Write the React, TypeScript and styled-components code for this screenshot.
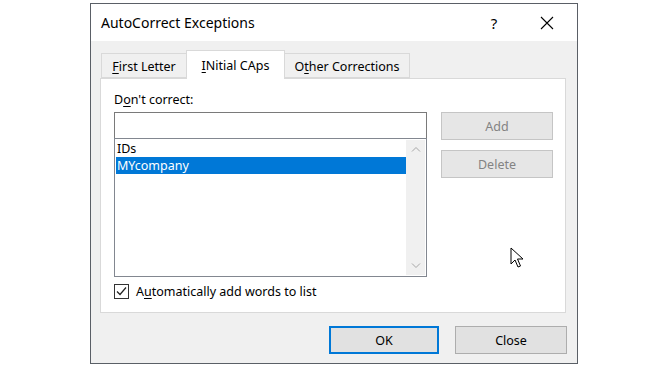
import React from 'react';
import styled, { createGlobalStyle } from 'styled-components';

const GlobalStyle = createGlobalStyle`
  html, body {
    margin: 0;
    padding: 0;
    background: #ffffff;
  }
  body {
    font-family: "Noto Sans", "Open Sans", sans-serif;
    font-size: 12.5px;
    color: #000;
  }
`;

const Page = styled.div`
  width: 669px;
  height: 369px;
  position: relative;
  overflow: hidden;
  background: #fff;
`;

const Dialog = styled.div`
  margin: 3px 0 0 90px;
  width: 486px;
  height: 359px;
  border: 1px solid #5a5f66;
  background: #f0f0f0;
  display: flex;
  flex-direction: column;
`;

const TitleBar = styled.div`
  height: 37px;
  background: #fff;
  display: flex;
  align-items: center;
  padding-left: 10px;
`;

const Title = styled.div`
  flex: 1;
  font-size: 14px;
  margin-top: -1px;
`;

const TitleButton = styled.div<{ $w: number }>`
  width: ${(p) => p.$w}px;
  height: 37px;
  display: flex;
  align-items: center;
  justify-content: center;
  font-size: 15px;
`;

const Content = styled.div`
  padding: 8px 10px 0 9px;
  display: flex;
  flex-direction: column;
`;

const TabRow = styled.div`
  display: flex;
  align-items: flex-end;
  height: 29px;
  padding-left: 1px;
  position: relative;
  z-index: 1;
`;

const Tab = styled.div<{ $active?: boolean; $w: number }>`
  width: ${(p) => p.$w}px;
  height: ${(p) => (p.$active ? 29 : 25)}px;
  box-sizing: border-box;
  border: 1px solid #d9d9d9;
  border-bottom: ${(p) => (p.$active ? 'none' : '1px solid #d9d9d9')};
  margin-left: ${(p) => (p.$active ? -1 : 0)}px;
  margin-right: ${(p) => (p.$active ? -1 : 0)}px;
  background: ${(p) => (p.$active ? '#fff' : '#f0f0f0')};
  display: flex;
  align-items: center;
  justify-content: center;
  padding-top: ${(p) => (p.$active ? 0 : 1)}px;
  margin-bottom: ${(p) => (p.$active ? -1 : 0)}px;
  position: relative;
  z-index: ${(p) => (p.$active ? 2 : 1)};
`;

const Panel = styled.div`
  width: 466px;
  height: 235px;
  box-sizing: border-box;
  border: 1px solid #d9d9d9;
  background: #fff;
  display: flex;
  padding: 13px 0 0 13px;
  gap: 14px;
`;

const LeftCol = styled.div`
  width: 313px;
  display: flex;
  flex-direction: column;
`;

const Label = styled.div`
  height: 20px;
  line-height: 16px;
`;

const TextInput = styled.div`
  height: 26px;
  box-sizing: border-box;
  border: 1px solid #7a7a7a;
  border-bottom: none;
`;

const ListBox = styled.div`
  height: 139px;
  box-sizing: border-box;
  border: 1px solid #828790;
  display: flex;
  padding: 1px;
`;

const Items = styled.div`
  flex: 1;
`;

const Item = styled.div<{ $selected?: boolean }>`
  height: 17px;
  line-height: 17px;
  padding-left: 1px;
  background: ${(p) => (p.$selected ? '#0078d7' : 'transparent')};
  color: ${(p) => (p.$selected ? '#fff' : '#000')};
`;

const ScrollBar = styled.div`
  width: 19px;
  background: #f0f0f0;
  display: flex;
  flex-direction: column;
  justify-content: space-between;
  align-items: center;
  padding: 6px 0;
`;

const CheckRow = styled.div`
  display: flex;
  align-items: center;
  margin-top: 6px;
  gap: 7px;
`;

const CheckBox = styled.div`
  width: 13px;
  height: 13px;
  border: 1px solid #333;
  display: flex;
  align-items: center;
  justify-content: center;
`;

const RightCol = styled.div`
  display: flex;
  flex-direction: column;
  padding-top: 20px;
  gap: 10px;
`;

const Button = styled.div<{ $disabled?: boolean; $default?: boolean; $w: number }>`
  width: ${(p) => p.$w}px;
  height: 28px;
  box-sizing: border-box;
  background: ${(p) => (p.$disabled ? '#e6e6e6' : '#e1e1e1')};
  border: ${(p) =>
    p.$default ? '2px solid #0078d7' : p.$disabled ? '1px solid #c5c5c5' : '1px solid #adadad'};
  color: ${(p) => (p.$disabled ? '#838383' : '#000')};
  display: flex;
  align-items: center;
  justify-content: center;
`;

const Footer = styled.div`
  display: flex;
  justify-content: flex-end;
  gap: 16px;
  padding-top: 13px;
`;

const U = styled.span`
  text-decoration: underline;
  text-underline-offset: 2px;
`;

const Cursor = styled.svg`
  position: absolute;
  left: 510px;
  top: 247px;
`;

const Chevron = ({ up }: { up?: boolean }) => (
  <svg width="10" height="6" viewBox="0 0 10 6">
    <path
      d={up ? 'M1 5.5 L5 1.5 L9 5.5' : 'M1 0.5 L5 4.5 L9 0.5'}
      fill="none"
      stroke="#a6a6a6"
      strokeWidth="1"
    />
  </svg>
);

const App: React.FC = () => {
  return (
    <Page>
      <GlobalStyle />
      <Dialog>
        <TitleBar>
          <Title>AutoCorrect Exceptions</Title>
          <TitleButton $w={46}>?</TitleButton>
          <TitleButton $w={60}>
            <svg width="14" height="14" viewBox="0 0 14 14">
              <path d="M1 1 L13 13 M13 1 L1 13" stroke="#000" strokeWidth="1.1" />
            </svg>
          </TitleButton>
        </TitleBar>
        <Content>
          <TabRow>
            <Tab $w={86}>
              <span>
                <U>F</U>irst Letter
              </span>
            </Tab>
            <Tab $w={99} $active>
              <span>
                <U>I</U>Nitial CAps
              </span>
            </Tab>
            <Tab $w={126}>
              <span>
                O<U>t</U>her Corrections
              </span>
            </Tab>
          </TabRow>
          <Panel>
            <LeftCol>
              <Label>
                D<U>o</U>n't correct:
              </Label>
              <TextInput />
              <ListBox>
                <Items>
                  <Item>IDs</Item>
                  <Item $selected>MYcompany</Item>
                </Items>
                <ScrollBar>
                  <Chevron up />
                  <Chevron />
                </ScrollBar>
              </ListBox>
              <CheckRow>
                <CheckBox>
                  <svg width="11" height="11" viewBox="0 0 11 11">
                    <path d="M1 5.5 L4 8.5 L10 1.5" fill="none" stroke="#222" strokeWidth="1.2" />
                  </svg>
                </CheckBox>
                <span>
                  A<U>u</U>tomatically add words to list
                </span>
              </CheckRow>
            </LeftCol>
            <RightCol>
              <Button $w={112} $disabled>Add</Button>
              <Button $w={112} $disabled>Delete</Button>
            </RightCol>
          </Panel>
          <Footer>
            <Button $w={110} $default>OK</Button>
            <Button $w={112}>Close</Button>
          </Footer>
        </Content>
      </Dialog>
      <Cursor width="14" height="22" viewBox="0 0 14 22">
        <path
          d="M1 1 L1 17 L5 13 L8 20 L10.5 19 L7.5 12 L13 12 Z"
          fill="#fff"
          stroke="#000"
          strokeWidth="1"
          strokeLinejoin="round"
        />
      </Cursor>
    </Page>
  );
};

export default App;
